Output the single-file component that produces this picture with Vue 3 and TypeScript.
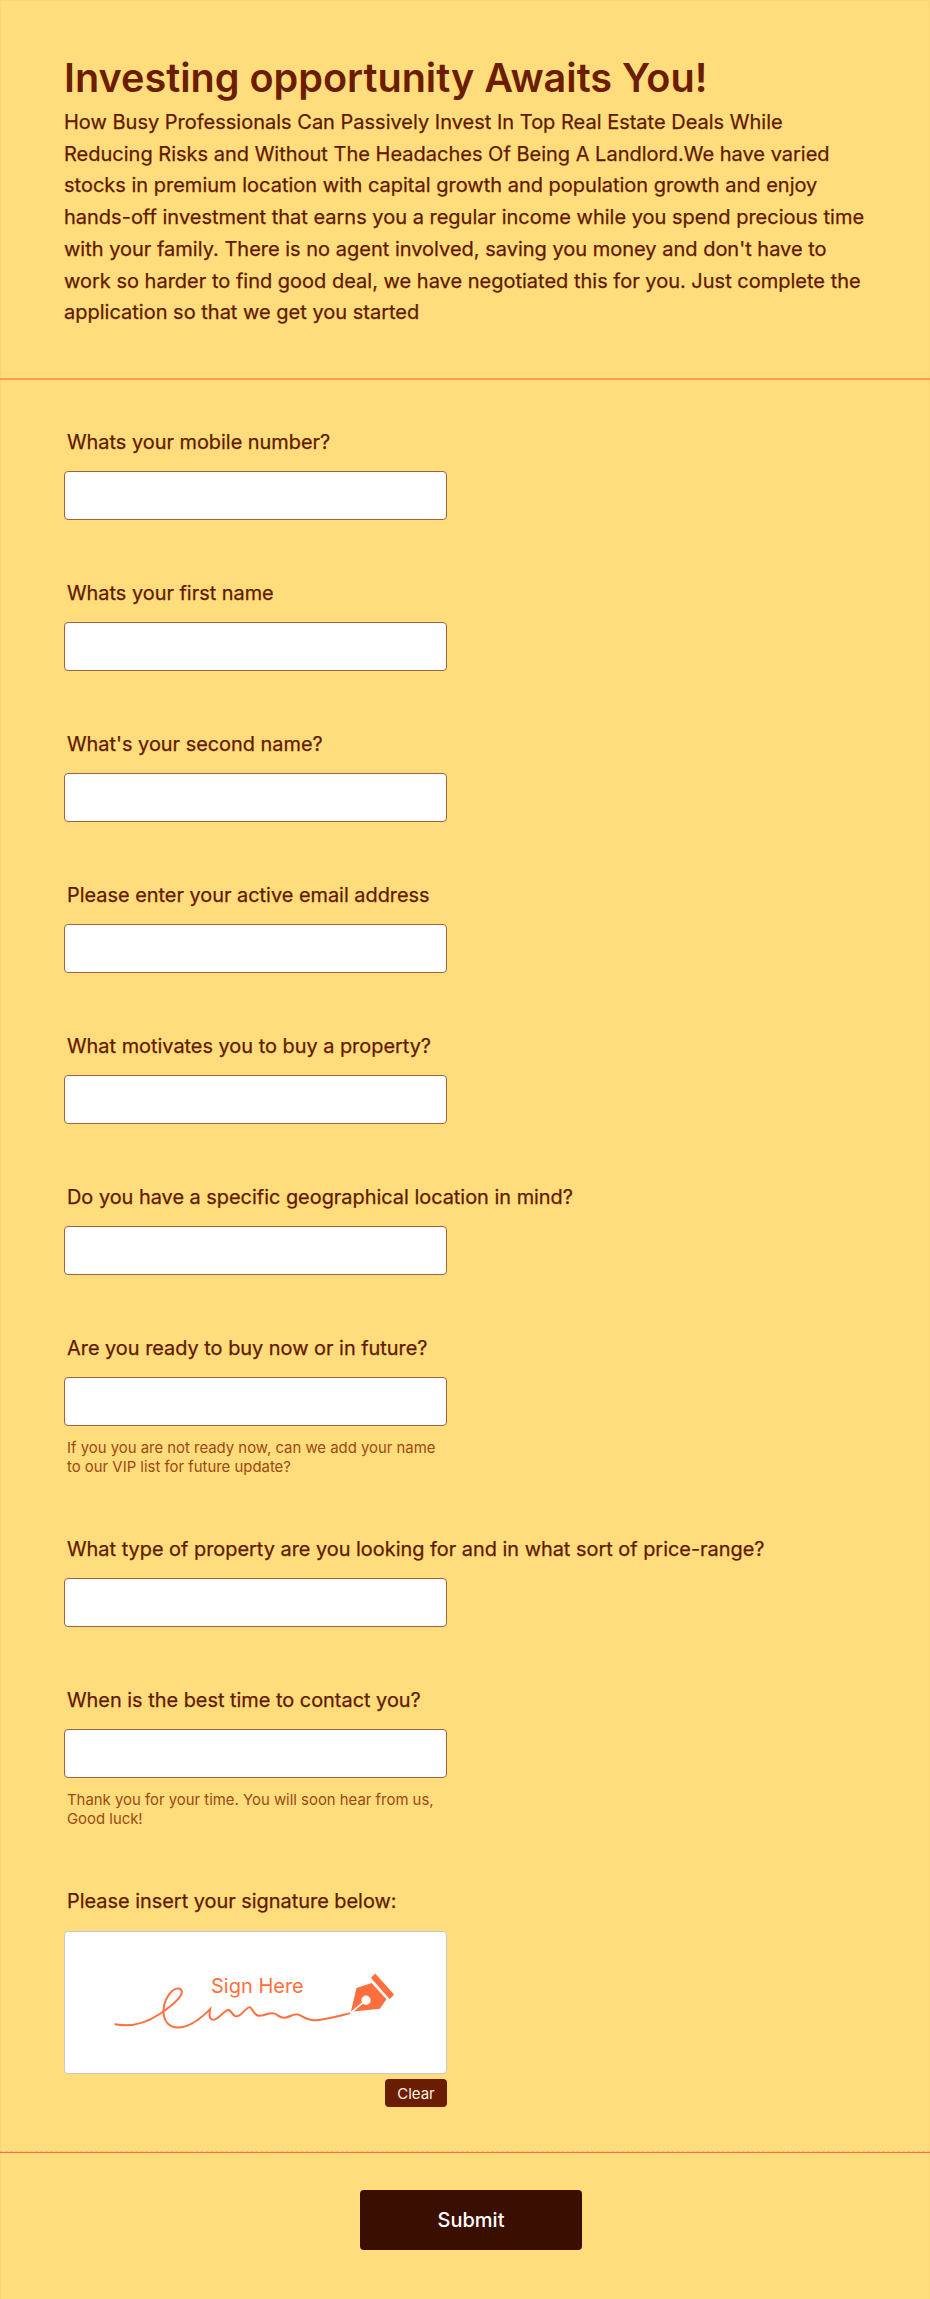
<script setup lang="ts">
interface Field {
  label: string
  hint?: string
}
const fields: Field[] = [
  { label: 'Whats your mobile number?' },
  { label: 'Whats your first name' },
  { label: "What's your second name?" },
  { label: 'Please enter your active email address' },
  { label: 'What motivates you to buy a property?' },
  { label: 'Do you have a specific geographical location in mind?' },
  { label: 'Are you ready to buy now or in future?', hint: 'If you you are not ready now, can we add your name to our VIP list for future update?' },
  { label: 'What type of property are you looking for and in what sort of price-range?' },
  { label: 'When is the best time to contact you?', hint: 'Thank you for your time. You will soon hear from us, Good luck!' },
]
</script>

<template>
  <main class="page">
    <header class="intro">
      <h1>Investing opportunity Awaits You!</h1>
      <p>How Busy Professionals Can Passively Invest In Top Real Estate Deals While Reducing Risks and Without The Headaches Of Being A Landlord.We have varied stocks in premium location with capital growth and population growth and enjoy hands-off investment that earns you a regular income while you spend precious time with your family. There is no agent involved, saving you money and don't have to work so harder to find good deal, we have negotiated this for you. Just complete the application so that we get you started</p>
    </header>
    <form class="form" @submit.prevent>
      <div v-for="f in fields" :key="f.label" class="field">
        <label class="label">{{ f.label }}</label>
        <input class="input" type="text" />
        <div v-if="f.hint" class="hint">{{ f.hint }}</div>
      </div>
      <div class="field sign">
        <label class="label">Please insert your signature below:</label>
        <div class="pad">
          <span class="sign-text">Sign Here</span>
          <svg class="sign-art" viewBox="73 32 1149 428" aria-hidden="true">
            <path class="stroke" d="M222 312 C262 320 310 312 358 280 C385 262 425 232 424 212 C422 198 398 200 382 226 C362 258 362 302 392 318 C428 332 470 306 510 266 C505 290 510 300 522 298 C538 294 552 270 566 268 C576 272 578 290 592 288 C606 286 618 262 630 260 C640 264 642 284 656 286 C672 288 692 274 706 280 C716 284 722 294 738 292 C752 290 764 278 778 283 C792 288 804 302 830 300 C860 298 900 287 932 279" />
            <path class="fill" d="M937 274 L954 202 L1000 187 L1045 236 L1025 265 Z" />
            <path class="fill" d="M1011 158 L1068 222 L1055 236 L998 172 Z" />
            <circle class="hole" cx="983" cy="239" r="14" />
            <path class="slit" d="M938 276 L983 239" />
          </svg>
        </div>
        <div class="clear-row"><button type="button" class="clear">Clear</button></div>
      </div>
    </form>
    <footer class="actions">
      <button type="submit" class="submit">Submit</button>
    </footer>
  </main>
</template>

<style>
body { margin: 0; background: #ffdc7c; }
</style>

<style scoped>
.page {
  box-sizing: border-box;
  width: 930px;
  height: 2299px;
  background: #ffdc7c;
  font-family: Inter, sans-serif;
  box-shadow: inset 1px 1px 0 #fad676, inset -1px 0 0 #fad676;
  display: flex;
  flex-direction: column;
}
.intro {
  box-sizing: border-box;
  height: 380px;
  padding: 56px 64px 0;
  border-bottom: 2px solid #ff9a5c;
}
h1 {
  margin: 0 0 7px;
  font-size: 39.6px;
  line-height: 44px;
  font-weight: 600;
  color: #6b1d00;
}
.intro p {
  margin: 0;
  font-size: 20px;
  line-height: 31.7px;
  font-weight: 400;
  color: #601a00;
  -webkit-text-stroke: 0.25px #601a00;
}
.form {
  flex: 1;
  padding: 49px 64px 0;
  display: flex;
  flex-direction: column;
  gap: 60px;
}
.field {
  width: 802px;
}
.label {
  display: block;
  margin: 0 0 15px 3px;
  font-size: 19.9px;
  line-height: 27px;
  font-weight: 400;
  color: #601a00;
  -webkit-text-stroke: 0.25px #601a00;
}
.input {
  box-sizing: border-box;
  display: block;
  width: 383px;
  height: 49px;
  background: #fff;
  border: 1px solid #a0613f;
  border-radius: 4px;
  outline: none;
  padding: 0 12px;
}
.hint {
  width: 375px;
  margin: 13px 0 -1px 3px;
  font-size: 14.9px;
  line-height: 19px;
  color: #9a4a12;
}
.pad {
  position: relative;
  box-sizing: border-box;
  width: 383px;
  height: 143px;
  margin-top: 16px;
  background: #fff;
  border: 1px solid #c9c9c9;
  border-radius: 4px;
}
.sign .label {
  margin-bottom: 0;
}
.sign-art {
  position: absolute;
  inset: 0;
  width: 100%;
  height: 100%;
}
.sign-text {
  position: absolute;
  left: 146px;
  top: 41px;
  font-size: 20px;
  line-height: 26px;
  color: #ff6f3d;
}
.stroke {
  fill: none;
  stroke: #ff6f3d;
  stroke-width: 6;
  stroke-linecap: round;
}
.fill { fill: #ff6f3d; }
.hole { fill: #fff; }
.slit { stroke: #fff; stroke-width: 5; }
.clear-row {
  width: 383px;
  display: flex;
  justify-content: flex-end;
  margin-top: 5px;
}
.clear {
  width: 62px;
  height: 28px;
  padding: 0;
  border: none;
  border-radius: 4px;
  background: #6b1d00;
  color: #fff3e0;
  font: 400 15px Inter, sans-serif;
}
.actions {
  box-sizing: border-box;
  height: 148px;
  border-top: 1px dashed #ffb870;
  box-shadow: inset 0 1px 0 #ff6f3d;
  padding-top: 38px;
  display: flex;
  justify-content: center;
  padding-left: 12px;
}
.submit {
  width: 222px;
  height: 60px;
  border: none;
  border-radius: 4px;
  background: #3a0e00;
  color: #fff;
  font: 500 20px Inter, sans-serif;
}
</style>
